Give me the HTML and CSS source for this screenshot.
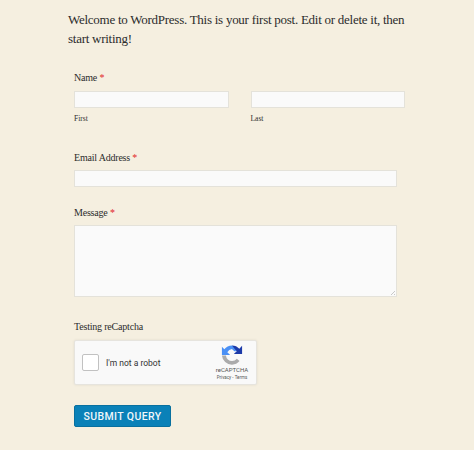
FILE: index.html
```html
<!DOCTYPE html>
<html>

<head lang="en">
    <meta charset="UTF-8">
    <title>Welcome to WordPress</title>
    <link rel="stylesheet" href="styles.css">
</head>

<body>
    <p class="intro">Welcome to WordPress. This is your first post. Edit or delete it, then start writing!</p>

    <form class="form">
        <div class="field field-name">
            <div class="label">Name <span class="req">*</span></div>
            <div class="name-row">
                <div class="name-col">
                    <input class="input" type="text">
                    <div class="sub">First</div>
                </div>
                <div class="name-col">
                    <input class="input" type="text">
                    <div class="sub">Last</div>
                </div>
            </div>
        </div>

        <div class="field field-email">
            <div class="label">Email Address <span class="req">*</span></div>
            <input class="input" type="text">
        </div>

        <div class="field field-message">
            <div class="label">Message <span class="req">*</span></div>
            <textarea class="textarea"></textarea>
        </div>

        <div class="field field-captcha">
            <div class="label">Testing reCaptcha</div>
            <div class="captcha">
                <span class="check"></span>
                <span class="robot">I'm not a robot</span>
                <div class="brand">
                    <svg class="logo" viewBox="0 0 24 24" width="22" height="22">
                        <path d="M12 1.500a10.500 10.500 0 0 1 8 3.700L23 2v9h-9l3.200-3.100A6.600 6.600 0 0 0 12 5.400z" fill="#1c3aa9"/>
                        <path d="M12 1.500A10.500 10.500 0 0 0 3.600 5.700L1 3v9h9L6.900 8.900A6.500 6.500 0 0 1 12 5.400l2.500 2.600L17 8z" fill="#4a90f5"/>
                        <path d="M1 12.500A11 11 0 0 0 12 22.500a10.500 10.500 0 0 0 8.200-3.900L17.300 16a6.600 6.600 0 0 1-5.300 2.600A6.600 6.600 0 0 1 5.400 12.500z" fill="#ababab"/>
                    </svg>
                    <div class="brand-name">reCAPTCHA</div>
                    <div class="brand-links">Privacy - Terms</div>
                </div>
            </div>
        </div>

        <button class="submit" type="button">SUBMIT QUERY</button>
    </form>
</body>

</html>
```

FILE: styles.css
```css
body {
    margin: 0;
    background: #f5efe0;
    color: #2c2c2c;
    font-family: "Liberation Serif", serif;
}

.intro {
    margin: 0;
    padding: 10px 60px 0 68px;
    font-size: 13px;
    line-height: 19px;
    letter-spacing: -.26px;
}

.form {
    padding: 23px 0 0 74px;
    width: 331px;
}

.field-email {
    margin-top: 27px;
}

.field-message {
    margin-top: 19px;
}

.field-captcha {
    margin-top: 23px;
}

.label {
    font-size: 10px;
    line-height: 13px;
    letter-spacing: -.2px;
    margin-bottom: 6px;
}

.field-name .label {
    margin-bottom: 7px;
}

.req {
    color: #e2262a;
}

.name-row {
    display: flex;
    gap: 22px;
}

.name-col {
    flex: 1;
}

.sub {
    font-size: 7.500px;
    line-height: 10px;
    margin-top: 6px;
}

.input,
.textarea {
    display: block;
    box-sizing: border-box;
    width: 100%;
    margin: 0;
    background: #fafafa;
    border: 1px solid #e4e2da;
}

.field-email .input,
.textarea {
    width: 323px;
}

.input {
    height: 17px;
}

.textarea {
    height: 72px;
    resize: none;
    background-image: linear-gradient(135deg, transparent 70%, #c9c9c9 70%, #c9c9c9 78%, transparent 78%, transparent 88%, #c9c9c9 88%);
    background-size: 7px 7px;
    background-position: right 1px bottom 1px;
    background-repeat: no-repeat;
}

.captcha {
    display: flex;
    align-items: center;
    box-sizing: border-box;
    width: 183px;
    height: 45px;
    margin-top: 7px;
    background: #f9f9f9;
    border: 1px solid #e6e4de;
    border-radius: 2px;
    box-shadow: 0 0 3px rgba(0, 0, 0, .08);
    font-family: Roboto, "Liberation Sans", sans-serif;
}

.check {
    box-sizing: border-box;
    width: 17px;
    height: 17px;
    margin-left: 7px;
    background: #fff;
    border: 1px solid #c1c1c1;
    border-radius: 2px;
}

.robot {
    margin-left: 7px;
    font-size: 8.500px;
    color: #333;
}

.brand {
    margin-left: auto;
    margin-right: 2px;
    width: 44px;
    text-align: center;
    color: #555;
}

.logo {
    display: block;
    margin: 0 auto;
}

.brand-name {
    font-size: 6px;
    line-height: 8px;
}

.brand-links {
    font-size: 4.500px;
    line-height: 7px;
}

.submit {
    display: block;
    box-sizing: border-box;
    width: 97px;
    height: 22px;
    margin-top: 20px;
    padding: 0;
    background: #0a81b8;
    border: 1px solid #08709f;
    border-radius: 2px;
    color: #f1f7fa;
    font-family: Roboto, "Liberation Sans", sans-serif;
    font-size: 10.500px;
    font-weight: 500;
    letter-spacing: .4px;
}
```
